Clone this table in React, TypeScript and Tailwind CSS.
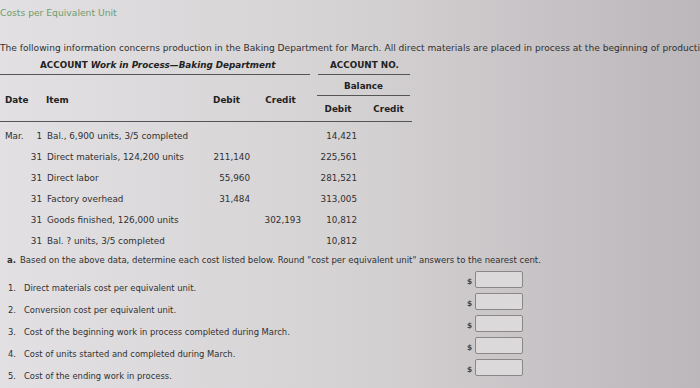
import React from "react";

const rows = [
  { date: "Mar.", day: "1", item: "Bal., 6,900 units, 3/5 completed", debit: "", credit: "", bd: "14,421", bc: "" },
  { date: "", day: "31", item: "Direct materials, 124,200 units", debit: "211,140", credit: "", bd: "225,561", bc: "" },
  { date: "", day: "31", item: "Direct labor", debit: "55,960", credit: "", bd: "281,521", bc: "" },
  { date: "", day: "31", item: "Factory overhead", debit: "31,484", credit: "", bd: "313,005", bc: "" },
  { date: "", day: "31", item: "Goods finished, 126,000 units", debit: "", credit: "302,193", bd: "10,812", bc: "" },
  { date: "", day: "31", item: "Bal. ? units, 3/5 completed", debit: "", credit: "", bd: "10,812", bc: "" },
];

const questions = [
  "Direct materials cost per equivalent unit.",
  "Conversion cost per equivalent unit.",
  "Cost of the beginning work in process completed during March.",
  "Cost of units started and completed during March.",
  "Cost of the ending work in process.",
];

export default function App() {
  return (
    <div className="w-[700px] h-[388px] overflow-hidden bg-linear-to-r from-[#e2e0e2] via-[#d5d2d4] to-[#bcb7ba] font-['DejaVu_Sans',sans-serif] text-[8.8px] text-[#303030] leading-[14px]">
      <div className="pt-[6px] h-[20px] text-[9.2px] text-[#6f9c6f] whitespace-nowrap">Costs per Equivalent Unit</div>
      <div className="mt-[21px] h-[14px] text-[9.1px] whitespace-nowrap">
        The following information concerns production in the Baking Department for March. All direct materials are placed in process at the beginning of production.
      </div>

      {/* table */}
      <div className="w-[412px]">
        <div className="flex mt-[3px] h-[17px]">
          <div className="w-[310px] border-b border-[#555] pl-[40px] font-bold text-[#222]">
            ACCOUNT <span className="italic">Work in Process—Baking Department</span>
          </div>
          <div className="ml-[8px] w-[92px] border-b border-[#555] pl-[12px] font-bold text-[#222]">ACCOUNT NO.</div>
        </div>
        <div className="flex h-[47px] border-b border-[#555] font-bold text-[#222]">
          <div className="w-[42px] pl-[5px] pt-[4px] flex items-center">Date</div>
          <div className="w-[160px] pl-[4px] pt-[4px] flex items-center">Item</div>
          <div className="w-[48px] pt-[4px] flex items-center justify-center pl-[1px]">Debit</div>
          <div className="w-[51px] pt-[4px] flex items-center justify-center pl-[10px]">Credit</div>
          <div className="w-[109px] flex flex-col pl-[16px]">
            <div className="h-[21px] border-b border-[#555] flex items-center justify-center pt-[2px]">Balance</div>
            <div className="flex-1 flex items-center">
              <div className="w-[42px] text-center">Debit</div>
              <div className="flex-1 text-center pl-[8px]">Credit</div>
            </div>
          </div>
        </div>
        <div className="pt-[3px]">
          {rows.map((r, i) => (
            <div key={i} className="flex h-[21px] items-center whitespace-nowrap">
              <div className="w-[30px] pl-[5px]">{r.date}</div>
              <div className="w-[12px] text-right">{r.day}</div>
              <div className="w-[160px] pl-[5px]">{r.item}</div>
              <div className="w-[48px] text-right">{r.debit}</div>
              <div className="w-[51px] text-right">{r.credit}</div>
              <div className="w-[56px] text-right">{r.bd}</div>
              <div className="w-[50px] text-right">{r.bc}</div>
            </div>
          ))}
        </div>
      </div>

      <div className="h-[17px] flex items-center pl-[7px] text-[8.5px] whitespace-nowrap">
        <span className="font-bold mr-[4px]">a.</span>
        Based on the above data, determine each cost listed below. Round "cost per equivalent unit" answers to the nearest cent.
      </div>

      <div className="flex">
        <div className="w-[467px] pt-[9px] text-[8.4px]">
          {questions.map((q, i) => (
            <div key={i} className="h-[22px] flex items-center pl-[8px] whitespace-nowrap">
              <span className="w-[16px]">{i + 1}.</span>
              <span>{q}</span>
            </div>
          ))}
        </div>
        <div className="pt-[3px] flex flex-col gap-[5px]">
          {questions.map((_, i) => (
            <div key={i} className="flex items-center h-[17px]">
              <span className="text-[7.5px] font-bold w-[8px] text-[#444] pt-[4px]">$</span>
              <div className="w-[48px] h-[17px] border border-[#8a8789] rounded-[2px] bg-[#dcd9db]" />
            </div>
          ))}
        </div>
      </div>
    </div>
  );
}
